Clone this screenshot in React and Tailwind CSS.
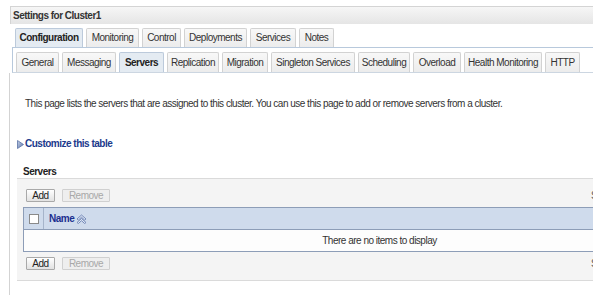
import React from "react";

const mainTabs = [
  ["Configuration", 68, true],
  ["Monitoring", 53],
  ["Control", 39],
  ["Deployments", 63],
  ["Services", 46],
  ["Notes", 35],
];

const subTabs = [
  ["General", 43],
  ["Messaging", 54],
  ["Servers", 45, true],
  ["Replication", 52],
  ["Migration", 46],
  ["Singleton Services", 84],
  ["Scheduling", 52],
  ["Overload", 48],
  ["Health Monitoring", 78],
  ["HTTP", 35],
];

function Tab({ label, w, sel, h }) {
  return (
    <div
      style={{ width: w }}
      className={
        "flex items-center justify-center rounded-t-[2px] border border-b-0 " +
        h +
        " " +
        (sel
          ? "bg-[#e4ebf2] border-[#bccadb] font-bold text-[#222]"
          : "bg-gradient-to-b from-[#f8f8f8] to-[#ececec] border-[#d2d2d2] text-[#333]")
      }
    >
      {label}
    </div>
  );
}

function Btn({ children, disabled }) {
  return (
    <div
      className={
        "h-[13px] flex items-center justify-center border rounded-[1px] " +
        (disabled
          ? "w-[48px] border-[#d0d0d0] bg-[#eeeeee] text-[#a8a8a8]"
          : "w-[29px] border-[#a9a9a9] bg-gradient-to-b from-[#ffffff] to-[#e2e2e2] text-[#222]")
      }
    >
      {children}
    </div>
  );
}

function Toolbar() {
  return (
    <div className="flex items-center h-[13px] relative">
      <div className="ml-[3px] flex gap-[7px]">
        <Btn>Add</Btn>
        <Btn disabled>Remove</Btn>
      </div>
      <div className="absolute left-[568px] top-0 h-[13px] flex items-center text-[#555] whitespace-nowrap antialiased">
        Showing 0 to 0 of 0
      </div>
    </div>
  );
}

export default function App() {
  return (
    <div
      className="w-[607px] h-[301px] bg-white overflow-hidden text-[10px] tracking-[-0.5px] leading-[12px] text-[#333]"
      style={{ fontFamily: '"Liberation Sans", Arial, sans-serif' }}
    >
      <div className="pt-[6px]">
        {/* header */}
        <div className="ml-[10px] w-[583px] h-[18px] border-t border-l border-[#d4d4d4] bg-gradient-to-b from-[#f6f6f6] to-[#e5e5e5] pl-[2px] flex items-center font-bold text-[#333]">
          Settings for Cluster1
        </div>
        {/* main tabs */}
        <div className="mt-[4px] ml-[15px] flex gap-[3px] items-end">
          {mainTabs.map(([l, w, s]) => (
            <Tab key={l} label={l} w={w} sel={s} h="h-[19px]" />
          ))}
        </div>
        {/* sub tab panel */}
        <div className="ml-[12px] w-[581px] border-t border-l border-b border-t-[#b8c9dc] border-l-[#b8c9dc] border-b-[#ccd6e1] pt-[4px] pl-[3px]">
          <div className="flex gap-[3px] items-end">
            {subTabs.map(([l, w, s]) => (
              <Tab key={l} label={l} w={w} sel={s} h="h-[20px]" />
            ))}
          </div>
        </div>
        {/* content */}
        <div className="ml-[9px] w-[584px] h-[222px] border-l border-[#d3d3d3] overflow-hidden">
          <div className="pt-[25px] pl-[15px] h-[12px] box-content whitespace-nowrap">
            This page lists the servers that are assigned to this cluster. You can use this page to add or remove servers from a cluster.
          </div>
          <div className="mt-[28px] ml-[7px] flex items-center h-[12px]">
            <svg width="7" height="9" viewBox="0 0 7 9" className="mr-[1px]">
              <defs>
                <linearGradient id="tri" x1="0" y1="0" x2="1" y2="1">
                  <stop offset="0" stopColor="#c5d1e6" />
                  <stop offset="1" stopColor="#5a73a8" />
                </linearGradient>
              </defs>
              <path d="M0.5 0.5 L6.5 4.5 L0.5 8.5 Z" fill="url(#tri)" stroke="#5b72a6" strokeWidth="0.8" strokeLinejoin="round" />
            </svg>
            <span className="font-bold text-[#1c3a8c]">Customize this table</span>
          </div>
          <div className="mt-[16px] ml-[13px] h-[12px] font-bold text-[#222]">Servers</div>
          {/* table container */}
          <div className="ml-[7px] w-[576px] border-t border-b border-[#dadada] bg-[#f4f4f4] pt-[10px] pb-[10px] pl-[6px] overflow-hidden">
            <Toolbar />
            <div className="mt-[5px] w-[712px] border-l border-t border-b border-[#8d9db7]">
              <div className="flex h-[22px] bg-[#cfdbec] border-b border-[#8d9db7]">
                <div className="w-[20px] flex items-center justify-center border-r border-[#a6b4ca]">
                  <div className="w-[10px] h-[10px] bg-white border border-[#8a8a8a]" />
                </div>
                <div className="flex items-center pl-[5px] font-bold text-[#1c2f8f]">
                  Name
                  <svg width="11" height="10" viewBox="0 0 11 10" className="ml-[2px]">
                    <path d="M1 5 L5.5 1 L10 5 L8.6 6 L5.5 3.2 L2.4 6 Z" fill="#dfe7f4" stroke="#6a80b2" strokeWidth="0.9" strokeLinejoin="round" />
                    <path d="M1 8.5 L5.5 4.5 L10 8.5 L8.6 9.5 L5.5 6.7 L2.4 9.5 Z" fill="#dfe7f4" stroke="#6a80b2" strokeWidth="0.9" strokeLinejoin="round" />
                  </svg>
                </div>
              </div>
              <div className="h-[21px] bg-[#fdfdfd] flex items-center justify-center text-[#333]">
                There are no items to display
              </div>
            </div>
            <div className="mt-[5px]">
              <Toolbar />
            </div>
          </div>
        </div>
      </div>
    </div>
  );
}
